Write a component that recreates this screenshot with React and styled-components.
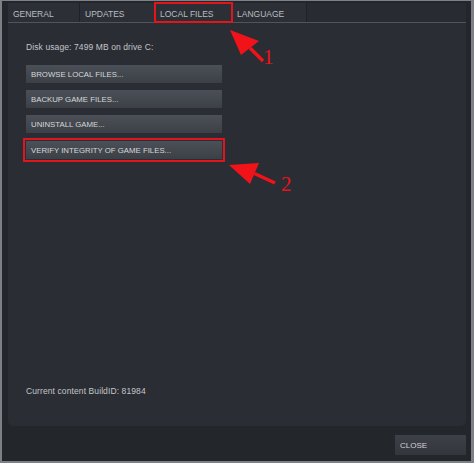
import React from 'react';
import styled, { createGlobalStyle } from 'styled-components';

const GlobalStyle = createGlobalStyle`
    html, body {
        margin: 0;
        padding: 0;
        background: #7d8086;
    }
    * {
        box-sizing: border-box;
    }
`;

const tabs = ['GENERAL', 'UPDATES', 'LOCAL FILES', 'LANGUAGE'];
const actions = [
    'BROWSE LOCAL FILES...',
    'BACKUP GAME FILES...',
    'UNINSTALL GAME...',
    'VERIFY INTEGRITY OF GAME FILES...',
];

const Arrow = ({ tip, corners, tail }) => (
    <svg width="474" height="463" style={{ position: 'absolute', left: 0, top: 0, pointerEvents: 'none' }}>
        <line x1={tail[0]} y1={tail[1]} x2={(corners[0][0] + corners[1][0]) / 2} y2={(corners[0][1] + corners[1][1]) / 2} stroke="#f0141a" strokeWidth="3.5" />
        <polygon points={`${tip[0]},${tip[1]} ${corners[0][0]},${corners[0][1]} ${corners[1][0]},${corners[1][1]}`} fill="#f0141a" />
    </svg>
);

const App = () => {
    return (
        <>
            <GlobalStyle />
            <Window>
                <TabBar>
                    {tabs.map((t) => (
                        <Tab key={t} highlighted={t === 'LOCAL FILES'}>{t}</Tab>
                    ))}
                    <TabFiller />
                </TabBar>
                <Panel>
                    <Info>Disk usage: 7499 MB on drive C:</Info>
                    <Actions>
                        {actions.map((a) => (
                            <ActionButton key={a} highlighted={a.startsWith('VERIFY')}>{a}</ActionButton>
                        ))}
                    </Actions>
                    <Spacer />
                    <Info>Current content BuildID: 81984</Info>
                </Panel>
                <Footer>
                    <CloseButton>CLOSE</CloseButton>
                </Footer>
                <Arrow tip={[228, 29]} corners={[[239, 54], [257, 40]]} tail={[261, 60]} />
                <Number style={{ left: 261, top: 46 }}>1</Number>
                <Arrow tip={[227, 164]} corners={[[248, 183], [257, 162]]} tail={[273, 182]} />
                <Number style={{ left: 279, top: 173 }}>2</Number>
            </Window>
        </>
    );
};

export default App;

// Styled Components
const Window = styled.div`
    position: relative;
    margin-left: 2px;
    margin-top: 1px;
    width: 469px;
    height: 460px;
    background-color: #23262b;
    display: flex;
    flex-direction: column;
    padding: 2px 3px 0 6px;
    font-family: "Liberation Sans", Arial, sans-serif;
`;

const TabBar = styled.div`
    display: flex;
    height: 20px;
    border-bottom: 1px solid #50545b;
    margin-right: 2px;
`;

const Tab = styled.div`
    width: ${({ highlighted }) => (highlighted ? '77px' : '75px')};
    padding: 6px 0 0 5px;
    font-size: 8.5px;
    color: #b9bdc2;
    background: #2c3036;
    border-right: 1px solid #1f2226;
    outline: ${({ highlighted }) => (highlighted ? '2px solid #e0161c' : 'none')};
    outline-offset: -1px;
    position: relative;
    z-index: ${({ highlighted }) => (highlighted ? 1 : 0)};
    &:first-child {
        width: 72px;
    }
`;

const TabFiller = styled.div`
    flex: 1;
    background: #282b31;
`;

const Panel = styled.div`
    flex: 0 0 403px;
    margin-right: 2px;
    background: #2a2d33;
    border-radius: 0 0 5px 5px;
    display: flex;
    flex-direction: column;
    padding: 19px 18px 30px;
`;

const Info = styled.div`
    font-size: 8.5px;
    color: #c3c6ca;
    letter-spacing: 0.1px;
`;

const Actions = styled.div`
    display: flex;
    flex-direction: column;
    gap: 7px;
    margin-top: 13px;
`;

const ActionButton = styled.div`
    width: 196px;
    height: 18px;
    padding: 5px 0 0 5px;
    font-size: 7.8px;
    color: #d6d8db;
    background: linear-gradient(#4b5058, #3c4046);
    outline: ${({ highlighted }) => (highlighted ? '2px solid #e0161c' : 'none')};
    outline-offset: 1px;
    &:nth-child(4) {
        margin-top: 1px;
    }
`;

const Spacer = styled.div`
    flex: 1;
`;

const Footer = styled.div`
    flex: 1;
    display: flex;
    justify-content: flex-end;
    padding: 9px 2px 0 0;
`;

const CloseButton = styled.div`
    width: 71px;
    height: 20px;
    padding: 6px 0 0 5px;
    font-size: 8px;
    color: #d2d4d7;
    background: linear-gradient(#3d4147, #33363c);
`;

const Number = styled.div`
    position: absolute;
    font-family: "Liberation Serif", "Times New Roman", serif;
    font-size: 21px;
    line-height: 1;
    color: #e8141a;
`;
